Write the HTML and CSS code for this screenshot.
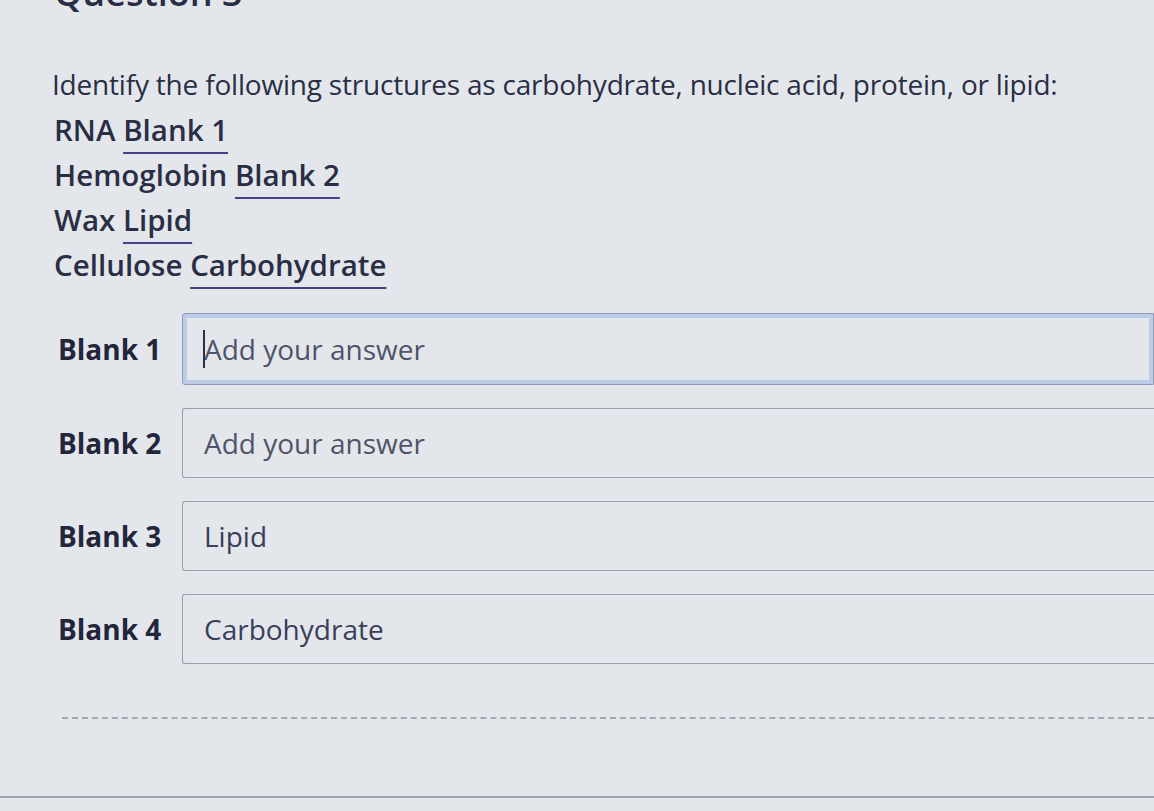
FILE: index.html
```html
<!DOCTYPE html>
<html>
<head>
<meta charset="utf-8">
<link rel="stylesheet" href="styles.css">
</head>
<body>
<div class="page">
  <h2 class="qtitle">Question 3</h2>
  <div class="question">
    <p class="prompt">Identify the following structures as carbohydrate, nucleic acid, protein, or lipid:</p>
    <p class="item">RNA <span class="blank">Blank 1</span></p>
    <p class="item">Hemoglobin <span class="blank">Blank 2</span></p>
    <p class="item">Wax <span class="blank">Lipid</span></p>
    <p class="item">Cellulose <span class="blank">Carbohydrate</span></p>
  </div>
  <div class="answers">
    <div class="row">
      <div class="label">Blank 1</div>
      <div class="box focused"><span class="caret"></span><span class="ph">Add your answer</span></div>
    </div>
    <div class="row">
      <div class="label">Blank 2</div>
      <div class="box"><span class="ph">Add your answer</span></div>
    </div>
    <div class="row">
      <div class="label">Blank 3</div>
      <div class="box"><span class="val">Lipid</span></div>
    </div>
    <div class="row">
      <div class="label">Blank 4</div>
      <div class="box"><span class="val">Carbohydrate</span></div>
    </div>
  </div>
  <div class="dashed"></div>
  <div class="solid"></div>
</div>
</body>
</html>
```
FILE: styles.css
```css
html, body {
  margin: 0;
  padding: 0;
  background: #e3e7ec;
  overflow: hidden;
}
.page {
  width: 1154px;
  height: 811px;
  overflow: hidden;
  font-family: "Open Sans", "Noto Sans", sans-serif;
  color: #2a2e44;
}
.qtitle {
  margin: -27px 0 0 54px;
  font-size: 36px;
  line-height: 40px;
  font-weight: 600;
  color: #2a2e44;
}
.question {
  margin: 49px 0 0 52px;
}
.question p {
  margin: 0;
  font-size: 29.5px;
  line-height: 45px;
}
.prompt {
  font-size: 28px !important;
  font-weight: 400;
  letter-spacing: -0.2px;
}
.item {
  font-weight: 600;
  padding-left: 2px;
}
.blank {
  text-decoration: underline;
  text-decoration-color: #4b3f8c;
  text-decoration-thickness: 2px;
  text-underline-offset: 11px;
}
.answers {
  margin-top: 26px;
  display: flex;
  flex-direction: column;
  gap: 23px;
}
.row {
  display: flex;
  align-items: center;
}
.label {
  width: 124px;
  padding-left: 58px;
  font-size: 28px;
  font-weight: 700;
  color: #23263a;
}
.box {
  flex: 1;
  height: 70px;
  box-sizing: border-box;
  border: 1.5px solid #9aa0ae;
  border-right: none;
  border-radius: 3px 0 0 3px;
  display: flex;
  align-items: center;
  padding-left: 21px;
  font-size: 28px;
  position: relative;
}
.box.focused {
  border: 1.5px solid #8f9ab4;
  box-shadow: inset 0 0 0 4px #bccbe6;
  height: 72px;
}
.caret {
  position: absolute;
  left: 20px;
  top: 16px;
  width: 2px;
  height: 38px;
  background: #2c3046;
}
.ph {
  color: #4f5468;
}
.val {
  color: #3a3e58;
}
.dashed {
  margin: 53px 0 0 62px;
  border-top: 2px dashed #a4a9b4;
}
.solid {
  margin-top: 77px;
  border-top: 2px solid #9da3b0;
}
```
